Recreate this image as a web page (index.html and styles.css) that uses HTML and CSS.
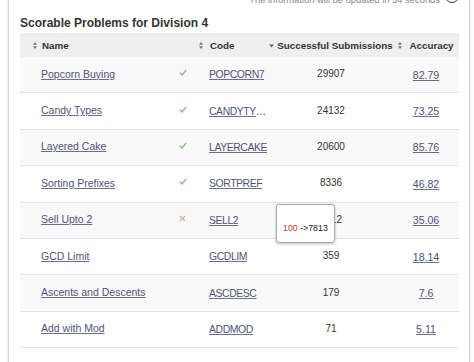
FILE: index.html
```html
<!DOCTYPE html>
<html>
<head>
<meta charset="utf-8">
<link rel="stylesheet" href="styles.css">
</head>
<body>
<div class="card">
  <div class="timer">
    <span class="timer-text">The information will be updated in 54 seconds</span>
    <span class="ring"></span>
  </div>
  <h2 class="title">Scorable Problems for Division 4</h2>
  <div class="table">
    <div class="row head">
      <div class="c-name"><svg class="sort" width="4" height="7" viewBox="0 0 4 7"><path d="M2 0L4 2.8H0Z M2 7L0 4.2H4Z" fill="#777"/></svg><span>Name</span></div>
      <div class="c-check"></div>
      <div class="c-code"><svg class="sort" width="4" height="7" viewBox="0 0 4 7"><path d="M2 0L4 2.8H0Z M2 7L0 4.2H4Z" fill="#777"/></svg><span>Code</span></div>
      <div class="c-subs"><svg class="caret" width="5" height="4" viewBox="0 0 5 4"><path d="M0 0.5H5L2.5 3.5Z" fill="#666"/></svg><span>Successful Submissions</span></div>
      <div class="c-acc"><svg class="sort" width="4" height="7" viewBox="0 0 4 7"><path d="M2 0L4 2.8H0Z M2 7L0 4.2H4Z" fill="#777"/></svg><span>Accuracy</span></div>
    </div>

    <div class="row odd">
      <div class="c-name"><a class="link" href="#">Popcorn Buying</a></div>
      <div class="c-check"><svg class="ok" width="8" height="7" viewBox="0 0 8 7"><path d="M0.8 3.7L3 5.9L7.2 0.9" stroke="#8cc58c" stroke-width="1.6" fill="none"/></svg></div>
      <div class="c-code"><a class="link" href="#">POPCORN7</a></div>
      <div class="c-subs">29907</div>
      <div class="c-acc"><a class="link" href="#">82.79</a></div>
    </div>

    <div class="row">
      <div class="c-name"><a class="link" href="#">Candy Types</a></div>
      <div class="c-check"><svg class="ok" width="8" height="7" viewBox="0 0 8 7"><path d="M0.8 3.7L3 5.9L7.2 0.9" stroke="#8cc58c" stroke-width="1.6" fill="none"/></svg></div>
      <div class="c-code"><a class="link" href="#">CANDYTYPES</a></div>
      <div class="c-subs">24132</div>
      <div class="c-acc"><a class="link" href="#">73.25</a></div>
    </div>

    <div class="row odd">
      <div class="c-name"><a class="link" href="#">Layered Cake</a></div>
      <div class="c-check"><svg class="ok" width="8" height="7" viewBox="0 0 8 7"><path d="M0.8 3.7L3 5.9L7.2 0.9" stroke="#8cc58c" stroke-width="1.6" fill="none"/></svg></div>
      <div class="c-code"><a class="link" href="#">LAYERCAKE</a></div>
      <div class="c-subs">20600</div>
      <div class="c-acc"><a class="link" href="#">85.76</a></div>
    </div>

    <div class="row">
      <div class="c-name"><a class="link" href="#">Sorting Prefixes</a></div>
      <div class="c-check"><svg class="ok" width="8" height="7" viewBox="0 0 8 7"><path d="M0.8 3.7L3 5.9L7.2 0.9" stroke="#8cc58c" stroke-width="1.6" fill="none"/></svg></div>
      <div class="c-code"><a class="link" href="#">SORTPREF</a></div>
      <div class="c-subs">8336</div>
      <div class="c-acc"><a class="link" href="#">46.82</a></div>
    </div>

    <div class="row odd tip-row">
      <div class="c-name"><a class="link" href="#">Sell Upto 2</a></div>
      <div class="c-check"><svg class="bad" width="7" height="7" viewBox="0 0 7 7"><path d="M1 1L6 6M6 1L1 6" stroke="#e7a594" stroke-width="1.3"/></svg></div>
      <div class="c-code"><a class="link" href="#">SELL2</a></div>
      <div class="c-subs">7812</div>
      <div class="c-acc"><a class="link" href="#">35.06</a></div>
      <div class="tooltip"><span class="old">100</span> -&gt;7813</div>
    </div>

    <div class="row">
      <div class="c-name"><a class="link" href="#">GCD Limit</a></div>
      <div class="c-check"></div>
      <div class="c-code"><a class="link" href="#">GCDLIM</a></div>
      <div class="c-subs">359</div>
      <div class="c-acc"><a class="link" href="#">18.14</a></div>
    </div>

    <div class="row odd">
      <div class="c-name"><a class="link" href="#">Ascents and Descents</a></div>
      <div class="c-check"></div>
      <div class="c-code"><a class="link" href="#">ASCDESC</a></div>
      <div class="c-subs">179</div>
      <div class="c-acc"><a class="link" href="#">7.6</a></div>
    </div>

    <div class="row">
      <div class="c-name"><a class="link" href="#">Add with Mod</a></div>
      <div class="c-check"></div>
      <div class="c-code"><a class="link" href="#">ADDMOD</a></div>
      <div class="c-subs">71</div>
      <div class="c-acc"><a class="link" href="#">5.11</a></div>
    </div>
  </div>
</div>
</body>
</html>
```

FILE: styles.css
```css
html, body {
  margin: 0;
  padding: 0;
  background: #ffffff;
}
body {
  padding-left: 8px;
  font-family: "Liberation Sans", Arial, Helvetica, sans-serif;
  color: #333;
  overflow: hidden;
}
.card {
  width: 462px;
  box-sizing: border-box;
  margin-top: -12px;
  border: 1px solid #d4d4d4;
  box-shadow: 0 0 4px rgba(0,0,0,0.12);
  background: #fff;
  padding: 0 10px 30px 11px;
}
.timer {
  display: flex;
  justify-content: flex-end;
  align-items: flex-start;
  gap: 5px;
  height: 17px;
}
.timer-text {
  font-size: 9.4px;
  line-height: 12px;
  color: #888;
  margin-top: 5px;
}
.ring {
  width: 12px;
  height: 12px;
  border: 1.6px solid #333;
  border-radius: 50%;
  flex: none;
}
.title {
  margin: 10px 0 3px;
  font-size: 12px;
  line-height: 14px;
  font-weight: bold;
  color: #333;
}
.table {
  width: 439px;
}
.row {
  display: grid;
  grid-template-columns: 152px 25px 72px 124px 66px;
  height: 36.4px;
  box-sizing: border-box;
  border-bottom: 1px solid #e4e4e4;
  align-items: center;
  position: relative;
}
.row.odd {
  background: #f9f9f9;
}
.row.head {
  height: 24px;
  background: #efefef;
  border-bottom: none;
  font-weight: bold;
  font-size: 9.8px;
  color: #333;
}
.head > div {
  display: flex;
  align-items: center;
}
.head .c-name { padding-left: 13px; gap: 5px; }
.head .c-code { padding-left: 2px; gap: 7px; }
.head .c-subs { justify-content: center; gap: 3px; }
.head .c-acc { justify-content: center; gap: 7px; }
.caret { position: relative; top: 1px; }

.link {
  color: #4e5479;
  text-decoration: underline;
  text-decoration-color: #6a6f90;
}
.c-name {
  padding-left: 21px;
  font-size: 10.5px;
  position: relative;
  top: -1px;
}
.c-check {
  padding-left: 7px;
  display: flex;
  align-items: center;
  position: relative;
  top: -2px;
}
.c-code {
  padding-left: 12px;
  padding-right: 0;
  font-size: 10.4px;
  letter-spacing: -0.4px;
  white-space: nowrap;
  overflow: hidden;
  text-overflow: ellipsis;
  min-width: 0;
}
.c-subs {
  text-align: center;
  font-size: 10px;
  position: relative;
  top: -1px;
}
.c-acc {
  text-align: center;
  font-size: 10.6px;
}
.head .c-name, .head .c-check, .head .c-subs, .head .c-code, .head .c-acc {
  top: 0;
  font-size: 9.8px;
  letter-spacing: 0;
}
.tooltip {
  position: absolute;
  left: 256px;
  top: 1px;
  width: 59px;
  height: 39px;
  box-sizing: border-box;
  background: #fff;
  border: 1px solid #a8a8a8;
  border-radius: 3px;
  box-shadow: 0 1px 3px rgba(0,0,0,0.25);
  padding: 17px 0 0 6px;
  font-size: 8.8px;
  line-height: 12px;
  color: #222;
  white-space: nowrap;
}
.old { color: #d03030; }
```
